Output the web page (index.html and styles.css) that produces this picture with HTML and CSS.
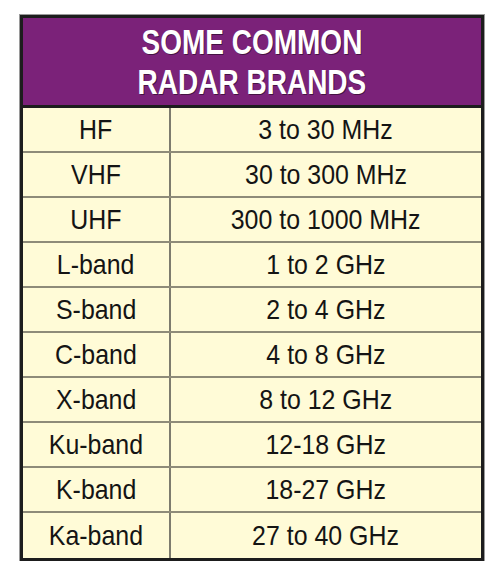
FILE: index.html
```html
<!DOCTYPE html>
<html lang="en">
<head>
  <meta charset="UTF-8">
  <title>Some Common Radar Brands</title>
  <link rel="stylesheet" href="styles.css">
</head>
<body>

  <table class="bands">
    <colgroup>
      <col class="col-name">
      <col>
    </colgroup>
    <thead>
      <tr>
        <th colspan="2"><span class="cond">SOME COMMON<br>RADAR BRANDS</span></th>
      </tr>
    </thead>
    <tbody>
      <tr><td class="name"><span class="cond">HF</span></td><td><span class="cond">3 to 30 MHz</span></td></tr>
      <tr><td class="name"><span class="cond">VHF</span></td><td><span class="cond">30 to 300 MHz</span></td></tr>
      <tr><td class="name"><span class="cond">UHF</span></td><td><span class="cond">300 to 1000 MHz</span></td></tr>
      <tr><td class="name"><span class="cond">L-band</span></td><td><span class="cond">1 to 2 GHz</span></td></tr>
      <tr><td class="name"><span class="cond">S-band</span></td><td><span class="cond">2 to 4 GHz</span></td></tr>
      <tr><td class="name"><span class="cond">C-band</span></td><td><span class="cond">4 to 8 GHz</span></td></tr>
      <tr><td class="name"><span class="cond">X-band</span></td><td><span class="cond">8 to 12 GHz</span></td></tr>
      <tr><td class="name"><span class="cond">Ku-band</span></td><td><span class="cond">12-18 GHz</span></td></tr>
      <tr><td class="name"><span class="cond">K-band</span></td><td><span class="cond">18-27 GHz</span></td></tr>
      <tr><td class="name"><span class="cond">Ka-band</span></td><td><span class="cond">27 to 40 GHz</span></td></tr>
    </tbody>
  </table>

</body>
</html>
```

FILE: styles.css
```css
html, body {
  margin: 0;
  padding: 0;
  background-color: #fff;
}

.bands {
  margin: 15px 0 0 20px;
  width: 464px;
  border-collapse: collapse;
  border: 3px solid #1d1d1d;
  box-shadow: 0 0 0 1px #9a9a9a;
  font-family: 'Liberation Sans', Arial, sans-serif;
  table-layout: fixed;
}

.col-name {
  width: 148px;
}

/* no condensed face installed, so squeeze the regular one */
.cond {
  display: inline-block;
  transform: scaleX(0.89);
  white-space: nowrap;
}

.bands th {
  height: 87px;
  padding: 0;
  background-color: #7b2279;
  color: #fff;
  font-size: 35px;
  line-height: 40px;
  font-weight: bold;
  text-shadow: 1px 1px 0 rgba(0, 0, 0, 0.45);
  border-bottom: 3px solid #1d1d1d;
}

.bands th .cond {
  transform: scaleX(0.8);
}

.bands td {
  height: 43px;
  padding: 0;
  background-color: #fffbd7;
  color: #141414;
  font-size: 28px;
  text-align: center;
  border-bottom: 2px solid #8e8b79;
}

.bands tr:last-child td {
  border-bottom: none;
  height: 45px;
}

.bands td.name {
  border-right: 2px solid #7d7b6e;
}
```
